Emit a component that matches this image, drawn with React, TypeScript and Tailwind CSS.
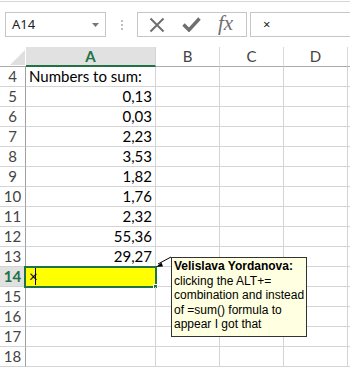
import React from "react";

const cellFont = { fontFamily: "Lato, 'Liberation Sans', sans-serif" };

const rows: { n: number; a: string; left?: boolean }[] = [
  { n: 4, a: "Numbers to sum:", left: true },
  { n: 5, a: "0,13" },
  { n: 6, a: "0,03" },
  { n: 7, a: "2,23" },
  { n: 8, a: "3,53" },
  { n: 9, a: "1,82" },
  { n: 10, a: "1,76" },
  { n: 11, a: "2,32" },
  { n: 12, a: "55,36" },
  { n: 13, a: "29,27" },
  { n: 14, a: "" },
  { n: 15, a: "" },
  { n: 16, a: "" },
  { n: 17, a: "" },
  { n: 18, a: "" },
];

export default function App() {
  return (
    <div className="relative w-[350px] h-[372px] bg-white overflow-hidden">
      {/* formula bar */}
      <div className="mt-[1px] h-[46px] border-t border-[#d6d6d6] flex items-start pt-[10px]">
        <div
          className="ml-[5px] w-[101px] h-[25px] border border-[#c6c6c6] flex items-center pl-[6px] pr-[6px] text-[13px] text-[#222]"
          style={{ fontFamily: "'Noto Sans', 'Open Sans', sans-serif" }}
        >
          <span className="flex-1">A14</span>
          <svg width="7" height="4" viewBox="0 0 7 4">
            <path d="M0 0 H7 L3.5 4 Z" fill="#777" />
          </svg>
        </div>
        <div className="ml-[15px] mt-[8px] flex flex-col gap-[2px]">
          <div className="w-[2px] h-[2px] bg-[#bdbdbd]" />
          <div className="w-[2px] h-[2px] bg-[#bdbdbd]" />
          <div className="w-[2px] h-[2px] bg-[#bdbdbd]" />
        </div>
        <div className="ml-[14px] w-[110px] h-[25px] border border-[#c6c6c6] flex items-center">
          <svg className="ml-[11px]" width="16" height="16" viewBox="0 0 16 16">
            <path d="M1.5 1.5 L14.5 14.5 M14.5 1.5 L1.5 14.5" stroke="#6f6f6f" strokeWidth="2" />
          </svg>
          <svg className="ml-[17px]" width="19" height="15" viewBox="0 0 19 15">
            <path d="M1.5 7.5 L7 13 L17.5 1.5" stroke="#6f6f6f" strokeWidth="3.4" fill="none" />
          </svg>
          <span
            className="ml-[17px] text-[21px] italic text-[#6f6f6f] leading-none -mt-[2px]"
            style={{ fontFamily: "'Liberation Serif', serif" }}
          >
            fx
          </span>
        </div>
        <div
          className="ml-[3px] flex-1 h-[25px] border-y border-l border-[#c6c6c6] flex items-center pl-[12px] text-[13px] text-[#222]"
          style={{ fontFamily: "'Noto Sans', 'Open Sans', sans-serif" }}
        >
          ×
        </div>
      </div>

      {/* grid */}
      <div className="grid grid-cols-[26px_130px_64px_64px_64px_1fr]" style={cellFont}>
        {/* header */}
        <div className="relative h-[20px] border-b border-[#ababab]">
          <svg className="absolute right-[1px] bottom-[1px]" width="15" height="15" viewBox="0 0 15 15">
            <path d="M15 0 V15 H0 Z" fill="#dfdfdf" />
          </svg>
        </div>
        <div className="h-[20px] bg-[#e1e1e1] border-b-2 border-[#217346] border-r border-r-[#d4d4d4] flex items-center justify-center text-[15px] font-bold text-[#217346] leading-none">
          A
        </div>
        {["B", "C", "D"].map((c) => (
          <div
            key={c}
            className="h-[20px] border-b border-[#ababab] border-r border-r-[#dadada] flex items-center justify-center text-[15px] text-[#444] leading-none"
          >
            {c}
          </div>
        ))}
        <div className="h-[20px] border-b border-[#ababab]" />

        {rows.map((r) => {
          const sel = r.n === 14;
          return (
            <React.Fragment key={r.n}>
              <div
                className={
                  "h-[20px] border-b border-[#d4d4d4] border-r border-r-[#a0a0a0] text-center text-[15px] leading-[19px] " +
                  (sel ? "bg-[#e1e1e1] text-[#217346] font-bold" : "text-[#444]")
                }
              >
                {r.n}
              </div>
              <div
                className={
                  "relative h-[20px] border-b border-r border-[#d4d4d4] text-[15px] leading-[19px] text-black whitespace-nowrap " +
                  (r.left ? "pl-[3px]" : "text-right pr-[3px]") +
                  (sel ? " bg-[#ffff00]" : "")
                }
              >
                {r.a}
                {sel && (
                  <>
                    <div className="absolute -left-[2px] -top-[1px] -right-[2px] -bottom-[2px] border-2 border-[#217346]" />
                    <div className="absolute -right-[3px] -bottom-[3px] w-[5px] h-[5px] bg-[#217346] border border-white" />
                    <span className="absolute left-[3px] top-0 leading-[19px]">×</span>
                    <div className="absolute left-[9px] top-[1px] w-[1px] h-[17px] bg-[#00007a]" />
                  </>
                )}
              </div>
              <div className="h-[20px] border-b border-r border-[#d4d4d4]" />
              <div className="h-[20px] border-b border-r border-[#d4d4d4]" />
              <div className="h-[20px] border-b border-r border-[#d4d4d4]" />
              <div className="h-[20px] border-b border-[#d4d4d4]" />
            </React.Fragment>
          );
        })}
      </div>

      {/* comment arrow */}
      <svg className="absolute left-[150px] top-[252px]" width="25" height="20" viewBox="0 0 25 20">
        <path d="M8 12 L21 5" stroke="#000" strokeWidth="1" />
        <path d="M6 15 L11.5 10.5 L13 14.5 Z" fill="#000" />
      </svg>

      {/* comment box */}
      <div
        className="absolute left-[171px] top-[257px] w-[136px] h-[80px] bg-[#ffffe1] border border-[#333] pl-[2px] pt-[1px] text-[12px] leading-[14.5px] text-black"
        style={{ fontFamily: "'Liberation Sans', Arial, sans-serif" }}
      >
        <div className="font-bold">Velislava Yordanova:</div>
        <div>clicking the ALT+=</div>
        <div>combination and instead</div>
        <div>of =sum() formula to</div>
        <div>appear I got that</div>
      </div>
    </div>
  );
}
